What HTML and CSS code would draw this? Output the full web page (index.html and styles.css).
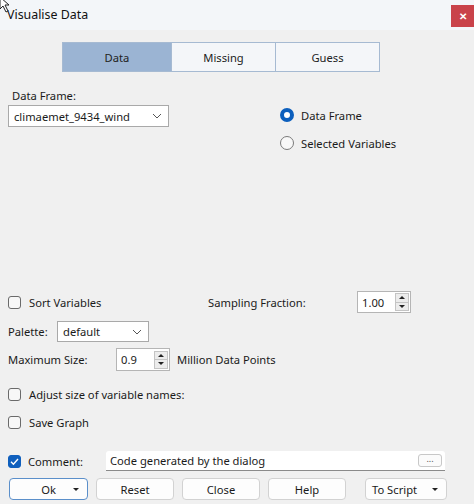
FILE: index.html
```html
<!DOCTYPE html>
<html>
<head>
<meta charset="utf-8">
<link rel="stylesheet" href="styles.css">
</head>
<body>
<div class="window">
  <svg class="cursor" width="12" height="16" viewBox="0 0 12 16"><path d="M1 0 L1 12 L4 9 L7 15 L9 14 L6 8 L10 8 Z" fill="#fff" stroke="#222" stroke-width="1"/></svg>
  <div class="titlebar">
    <span class="title">Visualise Data</span>
    <span class="close">&#x2715;</span>
  </div>
  <div class="content">
    <div class="tabs">
      <div class="tab active">Data</div>
      <div class="tab">Missing</div>
      <div class="tab">Guess</div>
    </div>

    <div class="top">
      <div class="frame-col">
        <div class="label">Data Frame:</div>
        <div class="combo combo-frame"><span>climaemet_9434_wind</span><svg class="chev" width="10" height="6" viewBox="0 0 10 6"><path d="M1 1 L5 5 L9 1" fill="none" stroke="#555" stroke-width="1"/></svg></div>
      </div>
      <div class="radio-col">
        <div class="radio-row"><span class="radio on"></span><span>Data Frame</span></div>
        <div class="radio-row"><span class="radio"></span><span>Selected Variables</span></div>
      </div>
    </div>

    <div class="row row-sort">
      <span class="check"></span><span class="sort-label">Sort Variables</span>
      <span class="samp-label">Sampling Fraction:</span>
      <div class="spin spin-samp"><span class="spin-val">1.00</span><span class="spin-btns"><span class="sb up"></span><span class="sb down"></span></span></div>
    </div>

    <div class="row row-palette">
      <span class="pal-label">Palette:</span>
      <div class="combo combo-pal"><span>default</span><svg class="chev" width="10" height="6" viewBox="0 0 10 6"><path d="M1 1 L5 5 L9 1" fill="none" stroke="#555" stroke-width="1"/></svg></div>
    </div>

    <div class="row row-max">
      <span class="max-label">Maximum Size:</span>
      <div class="spin spin-max"><span class="spin-val">0.9</span><span class="spin-btns"><span class="sb up"></span><span class="sb down"></span></span></div>
      <span class="mill">Million Data Points</span>
    </div>

    <div class="row row-adjust">
      <span class="check"></span><span class="cb-label">Adjust size of variable names:</span>
    </div>

    <div class="row row-save">
      <span class="check"></span><span class="cb-label">Save Graph</span>
    </div>

    <div class="row row-comment">
      <span class="check checked"><svg width="13" height="13" viewBox="0 0 13 13"><path d="M3 6.8 L5.4 9.2 L10 4" fill="none" stroke="#fff" stroke-width="1.4"/></svg></span>
      <span class="comment-label">Comment:</span>
      <div class="textbox"><span>Code generated by the dialog</span><span class="dots">...</span></div>
    </div>

    <div class="row row-buttons">
      <div class="btn btn-ok"><span class="btn-text">Ok</span><span class="caret"></span></div>
      <div class="btn"><span class="btn-text">Reset</span></div>
      <div class="btn"><span class="btn-text">Close</span></div>
      <div class="btn"><span class="btn-text">Help</span></div>
      <div class="btn btn-script"><span class="btn-text">To Script</span><span class="caret"></span></div>
    </div>
  </div>
</div>
</body>
</html>
```

FILE: styles.css
```css
* { box-sizing: border-box; }
html, body { margin: 0; padding: 0; }
body {
  width: 474px;
  height: 504px;
  overflow: hidden;
  background: #f0f0f0;
  font-family: "Noto Sans", "Open Sans", sans-serif;
  font-size: 11.2px;
  color: #1a1a1a;
}
.window { position: relative; width: 474px; height: 504px; }
.cursor { position: absolute; left: -1px; top: -3px; }

.titlebar {
  height: 30px;
  background: #f3f6f9;
  display: flex;
  align-items: flex-start;
}
.title {
  font-size: 12.4px;
  margin: 6px 0 0 7px;
  color: #111;
}
.close {
  margin-left: auto;
  margin-top: 5px;
  width: 23px;
  height: 22px;
  background: #c9434a;
  color: #fff;
  font-size: 10px;
  font-weight: bold;
  display: flex;
  align-items: center;
  justify-content: center;
}

.content { padding: 0 0 0 8px; }

.tabs {
  margin: 12px 0 0 54px;
  width: 318px;
  height: 30px;
  display: flex;
  border: 1px solid #a6bad2;
  background: #f4f6f9;
}
.tab {
  display: flex;
  align-items: center;
  justify-content: center;
  color: #222;
  border-left: 1px solid #a6bad2;
  flex: 0 0 auto;
}
.tab:nth-child(1) { width: 108px; border-left: none; }
.tab:nth-child(2) { width: 104px; }
.tab:nth-child(3) { width: 104px; }
.tab.active { background: #9bb4d3; }

.top { display: flex; margin-top: 15px; }
.frame-col { width: 272px; }
.label { margin-left: 4px; height: 17px; line-height: 17px; }
.combo {
  background: #fff;
  border: 1px solid #a9a9a9;
  display: flex;
  align-items: center;
  padding-left: 5px;
  position: relative;
}
.combo-frame { width: 161px; height: 22px; margin-top: 1px; }
.chev { position: absolute; right: 6px; top: 50%; margin-top: -3px; }

.radio-col { padding-top: 21px; }
.radio-row { display: flex; align-items: center; height: 14px; margin-bottom: 14px; }
.radio {
  width: 14px; height: 14px; border-radius: 50%;
  border: 1px solid #7a7a7a; background: #f8f8f8;
  margin-right: 7px;
}
.radio.on { border: 4px solid #0c5fbd; background: #fff; }

.row { display: flex; align-items: center; }
.row-sort { margin-top: 127px; height: 22px; }
.check {
  width: 13px; height: 13px;
  border: 1px solid #6a6a6a;
  border-radius: 3px;
  background: #f7f7f7;
  flex: 0 0 auto;
}
.check.checked { background: #0f5fbd; border-color: #0f5fbd; display: flex; }
.check.checked svg { margin: -1px; }
.sort-label { margin-left: 8px; width: 179px; }
.cb-label { margin-left: 8px; }
.samp-label { width: 149px; }

.spin {
  background: #fff;
  border: 1px solid #b5b5b5;
  display: flex;
  align-items: center;
  padding-left: 4px;
}
.spin-samp { width: 54px; height: 22px; }
.spin-val { flex: 1; }
.spin-btns {
  width: 14px; height: 18px; margin-right: 1px;
  display: flex; flex-direction: column;
  border: 1px solid #c4c4c4;
  background: #ececec;
}
.sb { flex: 1; position: relative; }
.sb.up { border-bottom: 1px solid #c4c4c4; }
.sb.up::after, .sb.down::after {
  content: ""; position: absolute; left: 3px; width: 0; height: 0;
  border-left: 3px solid transparent; border-right: 3px solid transparent;
}
.sb.up::after { top: 2px; border-bottom: 3px solid #222; }
.sb.down::after { top: 2px; border-top: 3px solid #222; }

.row-palette { margin-top: 8px; height: 21px; }
.pal-label { width: 49px; }
.combo-pal { width: 92px; height: 21px; }

.row-max { margin-top: 6px; height: 23px; }
.max-label { width: 108px; }
.spin-max { width: 54px; height: 23px; }
.mill { margin-left: 7px; }

.row-adjust { margin-top: 12px; height: 22px; }
.row-save { margin-top: 6px; height: 22px; }

.row-comment { margin-top: 18px; height: 20px; }
.comment-label { margin-left: 7px; width: 78px; }
.textbox {
  width: 339px; height: 20px;
  background: #fff;
  border-bottom: 1px solid #8a8a8a;
  border-radius: 3px 3px 0 0;
  display: flex; align-items: center;
  padding-left: 4px;
  position: relative;
}
.dots {
  position: absolute; right: 3px; top: 3px;
  width: 24px; height: 13px;
  border: 1px solid #c8c8c8; border-radius: 3px;
  font-size: 9px; line-height: 8px; text-align: center; color: #555;
  background: #fbfbfb;
}

.row-buttons { margin-top: 7px; height: 22px; }
.btn {
  width: 78px; height: 22px;
  background: #fdfdfd;
  border: 1px solid #d2d2d2;
  border-radius: 4px;
  margin-right: 8px;
  display: flex; align-items: center; justify-content: center;
  position: relative;
}
.btn-ok { margin-left: 1px; width: 79px; border: 1.5px solid #5b8fca; }
.btn-script { margin-left: 11px; width: 82px; justify-content: flex-start; padding-left: 6px; }
.caret {
  position: absolute; right: 8px; top: 9px;
  border-left: 3px solid transparent; border-right: 3px solid transparent;
  border-top: 3px solid #222;
}
```
